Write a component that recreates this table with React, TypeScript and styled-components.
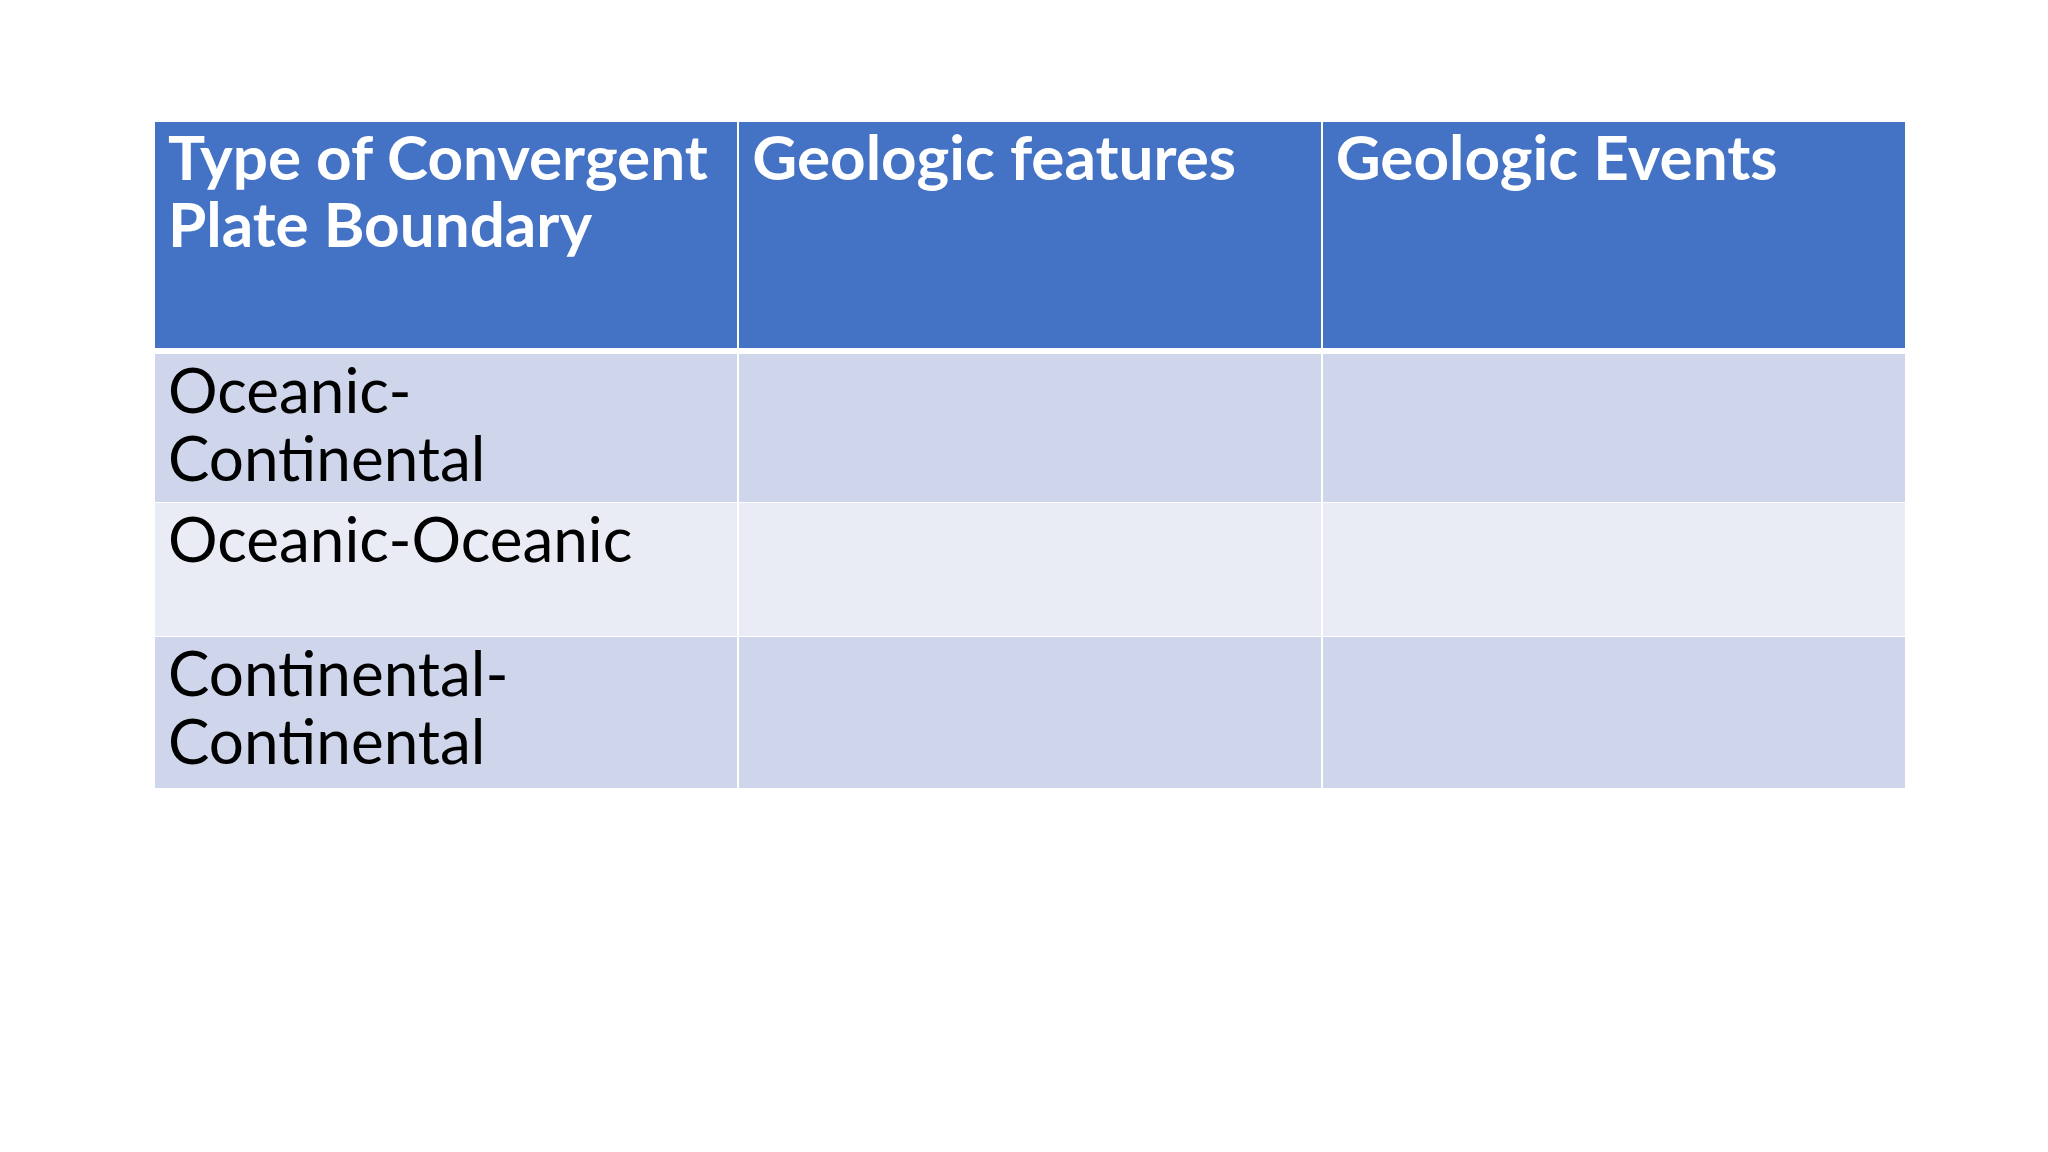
import React from 'react';
import styled, { createGlobalStyle } from 'styled-components';

const GlobalStyle = createGlobalStyle`
  html, body {
    margin: 0;
    padding: 0;
    background: #FFFFFF;
  }
`

const Slide = styled.div`
  width: 2048px;
  height: 1152px;
  box-sizing: border-box;
  padding: 122px 0 0 155px;
  background: #FFFFFF;
  font-family: Lato, "Open Sans", sans-serif;
`

const Table = styled.table`
  width: 1750px;
  border-collapse: collapse;
  table-layout: fixed;
`

const HeadCell = styled.th`
  height: 229px;
  box-sizing: border-box;
  padding: 1px 13px 0 13px;
  vertical-align: top;
  text-align: left;
  background: #4472C4;
  color: #FFFFFF;
  font-weight: 700;
  font-size: 62px;
  line-height: 67px;
  border-left: 2px solid #FFFFFF;
  border-bottom: 6px solid #FFFFFF;

  &:first-child {
    border-left: none;
  }
`

const BodyRow = styled.tr<{ $shade: 'dark' | 'light'; $height: number }>`
  height: ${p => p.$height}px;
  background: ${p => (p.$shade === 'dark' ? '#CFD5EA' : '#E9EBF5')};
`

const Cell = styled.td`
  box-sizing: border-box;
  padding: 1px 13px 0 13px;
  vertical-align: top;
  color: #000000;
  font-weight: 400;
  font-size: 62px;
  line-height: 68px;
  border-left: 2px solid #FFFFFF;
  border-top: 1px solid #FFFFFF;

  &:first-child {
    border-left: none;
  }
`

const headers = ['Type of Convergent Plate Boundary', 'Geologic features', 'Geologic Events']

const rows: { label: React.ReactNode; shade: 'dark' | 'light'; height: number }[] = [
  { label: <>Oceanic-<br />Continental</>, shade: 'dark', height: 151 },
  { label: 'Oceanic-Oceanic', shade: 'light', height: 134 },
  { label: <>Continental-<br />Continental</>, shade: 'dark', height: 152 },
]

const App = () => (
  <>
    <GlobalStyle />
    <Slide>
      <Table>
        <thead>
          <tr>
            {headers.map(h => (
              <HeadCell key={h}>{h}</HeadCell>
            ))}
          </tr>
        </thead>
        <tbody>
          {rows.map((r, i) => (
            <BodyRow key={i} $shade={r.shade} $height={r.height}>
              <Cell>{r.label}</Cell>
              <Cell />
              <Cell />
            </BodyRow>
          ))}
        </tbody>
      </Table>
    </Slide>
  </>
)

export default App
